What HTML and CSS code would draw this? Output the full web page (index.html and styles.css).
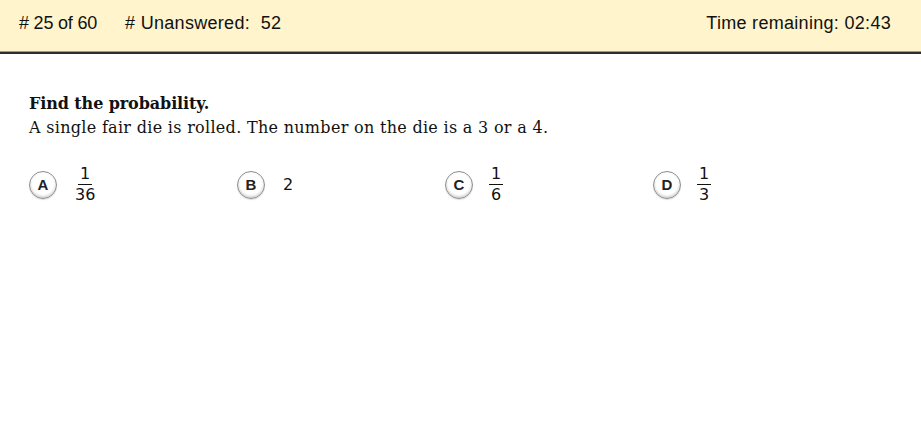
FILE: index.html
```html
<!DOCTYPE html>
<html>
<head>
<meta charset="utf-8">
<link rel="stylesheet" href="styles.css">
</head>
<body>
<header class="topbar">
  <div class="counts">
    <span class="num"># 25 of 60</span>
    <span class="unans"># Unanswered:&nbsp; 52</span>
  </div>
  <div class="timer">Time remaining: 02:43</div>
</header>
<main class="question">
  <div class="title">Find the probability.</div>
  <div class="stem">A single fair die is rolled. The number on the die is a 3 or a 4.</div>
  <div class="options">
    <div class="opt"><span class="bubble">A</span><span class="frac"><span class="n">1</span><span class="d">36</span></span></div>
    <div class="opt"><span class="bubble">B</span><span class="plain">2</span></div>
    <div class="opt"><span class="bubble">C</span><span class="frac"><span class="n">1</span><span class="d">6</span></span></div>
    <div class="opt"><span class="bubble">D</span><span class="frac"><span class="n">1</span><span class="d">3</span></span></div>
  </div>
</main>
</body>
</html>
```
FILE: styles.css
```css
html, body { margin: 0; padding: 0; background: #fff; }
body { width: 921px; height: 428px; overflow: hidden; }
.topbar {
  display: flex;
  justify-content: space-between;
  align-items: center;
  box-sizing: border-box;
  height: 52px;
  padding: 0 30px 4px 19px;
  margin-bottom: 2px;
  background: #fff4cc;
  border-bottom: 1px solid #9a9a9a;
  box-shadow: 0 2px 0 #2e2e2e;
  font-family: "Liberation Sans", Arial, sans-serif;
  font-size: 18px;
  color: #111;
}
.counts { display: flex; gap: 28px; }
.num { letter-spacing: -0.2px; }
.unans { letter-spacing: 0.3px; }
.timer { letter-spacing: 0.3px; }
.question {
  padding: 38px 0 0 29px;
  font-family: "DejaVu Serif", serif;
  color: #111;
}
.title { font-weight: bold; font-size: 16px; letter-spacing: -0.1px; line-height: 24px; }
.stem { font-size: 16px; letter-spacing: 0.3px; line-height: 24px; }
.options { display: flex; margin-top: 24px; }
.opt { width: 208px; display: flex; align-items: center; gap: 16px; }
.bubble {
  box-sizing: border-box;
  width: 28px; height: 28px;
  border-radius: 50%;
  border: 1.5px solid #8f8f8f;
  background: radial-gradient(circle at 50% 40%, #ffffff 55%, #e2e2e2 100%);
  box-shadow: inset 0 -1px 3px rgba(0,0,0,0.18), 0 1px 1px rgba(0,0,0,0.12);
  display: flex; align-items: center; justify-content: center;
  font-family: "Liberation Sans", Arial, sans-serif;
  font-weight: bold; font-size: 15px; color: #222;
}
.frac {
  display: inline-flex; flex-direction: column; align-items: center;
  font-family: "DejaVu Sans", Verdana, sans-serif; font-size: 16px; color: #111;
}
.frac .n { padding: 0 2px; line-height: 20px; border-bottom: 1px solid #111; }
.frac .d { line-height: 20px; padding: 0 2px; }
.plain { font-family: "DejaVu Sans", Verdana, sans-serif; font-size: 16px; color: #111; padding-left: 2px; }
```
